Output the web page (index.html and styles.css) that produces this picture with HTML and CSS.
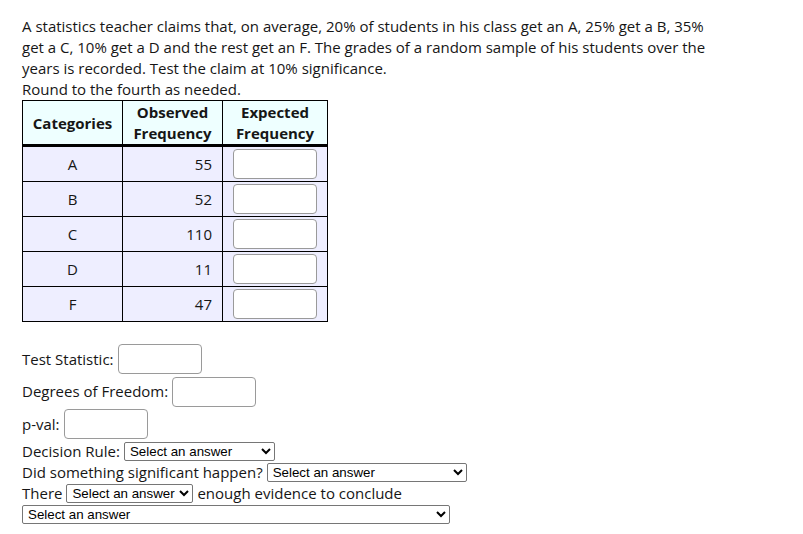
FILE: index.html
```html
<!DOCTYPE html>
<html lang="en">
<head>
    <meta charset="UTF-8">
    <title>Goodness of Fit</title>
    <link rel="stylesheet" href="styles.css">
</head>
<body>
    <div class="question">
        <p class="prompt">A statistics teacher claims that, on average, 20% of students in his class get an A, 25% get a B, 35% get a C, 10% get a D and the rest get an F. The grades of a random sample of his students over the years is recorded. Test the claim at 10% significance.</p>
        <p class="prompt">Round to the fourth as needed.</p>

        <table class="freq-table">
            <thead>
                <tr>
                    <th class="col-cat">Categories</th>
                    <th class="col-obs">Observed Frequency</th>
                    <th class="col-exp">Expected Frequency</th>
                </tr>
            </thead>
            <tbody>
                <tr><td class="cat">A</td><td class="obs">55</td><td class="exp"><input type="text"></td></tr>
                <tr><td class="cat">B</td><td class="obs">52</td><td class="exp"><input type="text"></td></tr>
                <tr><td class="cat">C</td><td class="obs">110</td><td class="exp"><input type="text"></td></tr>
                <tr><td class="cat">D</td><td class="obs">11</td><td class="exp"><input type="text"></td></tr>
                <tr><td class="cat">F</td><td class="obs">47</td><td class="exp"><input type="text"></td></tr>
            </tbody>
        </table>

        <div class="answers">
            <div class="field">Test Statistic: <input type="text"></div>
            <div class="field">Degrees of Freedom: <input type="text"></div>
            <div class="field">p-val: <input type="text"></div>
            <div class="choice">Decision Rule: <select class="sel-rule"><option>Select an answer</option></select></div>
            <div class="choice">Did something significant happen? <select class="sel-sig"><option>Select an answer</option></select></div>
            <div class="choice">There <select class="sel-there"><option>Select an answer</option></select> enough evidence to conclude</div>
            <div class="choice"><select class="sel-conclude"><option>Select an answer</option></select></div>
        </div>
    </div>
</body>
</html>
```

FILE: styles.css
```css
body {
    margin: 8px;
    background-color: #fff;
    color: #161616;
    font-family: "Open Sans", "DejaVu Sans", sans-serif;
    font-size: 15px;
    line-height: 21px;
}
.question {
    padding: 8px 14px;
    width: 690px;
}
.prompt {
    margin: 0;
}
.freq-table {
    border-collapse: collapse;
    table-layout: fixed;
    width: 306px;
}
.freq-table .col-cat,
.freq-table .col-obs {
    width: 99px;
}
.freq-table th {
    background-color: #eeffff;
    border: 1px solid #000;
    border-bottom: 3px solid #000;
    padding: 1px 0 0;
    font-weight: 700;
    text-align: center;
}
.freq-table td {
    background-color: #eeeeff;
    border: 1px solid #000;
    padding: 2px 10px;
    height: 30px;
}
.freq-table .cat {
    text-align: center;
}
.freq-table .obs {
    text-align: right;
}
.freq-table .exp {
    text-align: center;
    padding: 2px 0;
}
input[type="text"] {
    width: 84px;
    height: 30px;
    box-sizing: border-box;
    border: 1px solid #9a9a9a;
    border-radius: 4px;
    padding: 2px 4px;
    vertical-align: middle;
    font-family: inherit;
    font-size: 15px;
}
.answers {
    margin-top: 22px;
}
.field {
    height: 30px;
    margin-bottom: 2.5px;
    display: flex;
    align-items: center;
    gap: 4px;
}
.field:nth-child(3) {
    margin-bottom: 2px;
}
.field input {
    margin: 0;
}
.choice {
    height: 21px;
    display: flex;
    align-items: center;
    gap: 4px;
}
select {
    height: 19px;
    border: 1px solid #767676;
    border-radius: 2px;
    background-color: #fff;
    color: #000;
    font-family: "Liberation Sans", Arial, sans-serif;
    font-size: 13.33px;
    padding: 0 1px;
    margin: 0;
}
.sel-rule {
    width: 151px;
}
.sel-sig {
    width: 200px;
}
.sel-there {
    width: 127px;
}
.sel-conclude {
    width: 428px;
}
```
